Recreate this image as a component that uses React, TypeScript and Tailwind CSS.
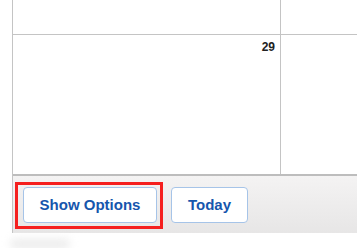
export default function App() {
  return (
    <div className="w-[357px] h-[248px] bg-white overflow-hidden font-['Liberation_Sans',Arial,sans-serif]">
      <div className="ml-[12px] border-l border-[#c4c4c4]">
        {/* calendar rows */}
        <div className="flex h-[35px] border-b border-[#c4c4c4]">
          <div className="w-[268px] border-r border-[#c4c4c4]" />
          <div className="flex-1" />
        </div>
        <div className="flex h-[139px]">
          <div className="w-[268px] border-r border-[#c4c4c4] flex justify-end pr-[5px] pt-[6px]">
            <span className="text-[12px] font-bold text-[#222] leading-none">29</span>
          </div>
          <div className="flex-1" />
        </div>
        {/* toolbar */}
        <div className="h-[59px] border-t-2 border-[#bdbdbd] bg-gradient-to-b from-[#f4f3f3] to-[#e7e6e6] flex items-start pt-[6px] pl-[2px] gap-[8px]">
          <div className="border-[3px] border-[#f5201f] pt-[2px] pb-[3px] pl-[5px] pr-[3px]">
            <button className="w-[134px] h-[36px] bg-white border border-[#a6c4e8] rounded-[4px] text-[15px] font-bold text-[#1656ad]">
              Show Options
            </button>
          </div>
          <button className="mt-[5px] w-[77px] h-[36px] bg-white border border-[#a6c4e8] rounded-[4px] text-[15px] font-bold text-[#1656ad]">
            Today
          </button>
        </div>
      </div>
      <div className="ml-[10px] mt-[6px] w-[60px] h-[10px] rounded-full bg-[#ececec] blur-[4px]" />
    </div>
  )
}
